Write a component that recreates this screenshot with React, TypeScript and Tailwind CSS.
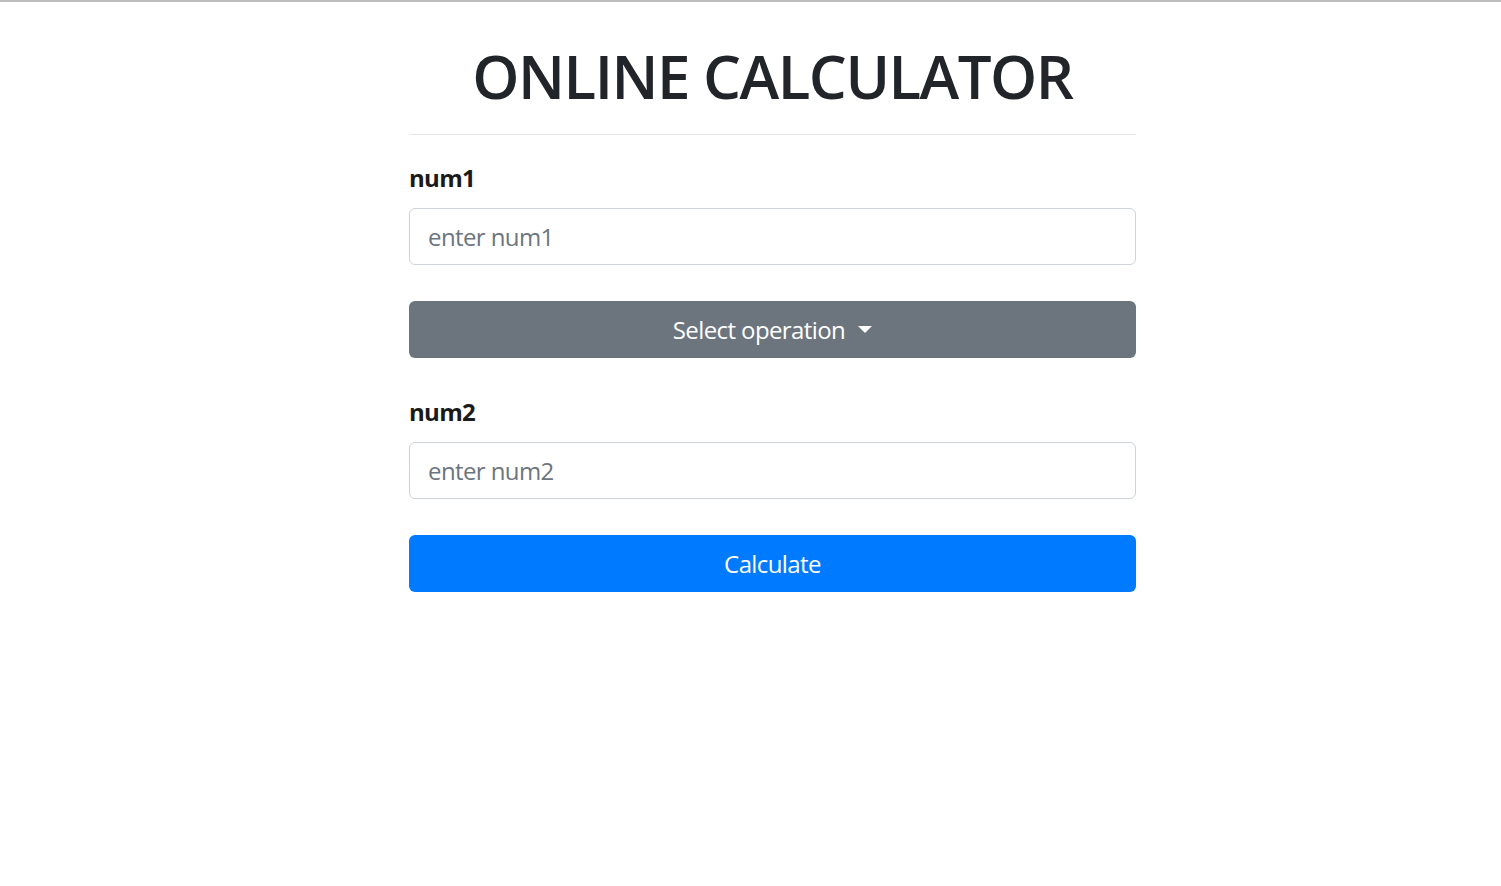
export default function App() {
  return (
    <div className="min-h-screen bg-white font-['Open_Sans',sans-serif] text-[#212529]">
      {/* top strip */}
      <div className="h-[2px] bg-[#bdbdbd]"></div>

      <div className="ml-[409px] w-[727px] pt-[38px] flex flex-col">
        <h1 className="h-[72px] text-[60px] leading-[72px] font-semibold text-center tracking-[-1.5px]">
          ONLINE CALCULATOR
        </h1>
        <div className="mt-[22px] border-t border-[#e6e6e6]"></div>

        {/* num1 */}
        <label className="mt-[25px] h-[36px] text-[24px] leading-[36px] font-bold tracking-[-0.7px] text-[#1a1a1a]">
          num1
        </label>
        <input
          type="text"
          placeholder="enter num1"
          className="mt-[12px] h-[57px] w-full rounded-[6px] border border-[#ced4da] px-[18px] text-[24px] tracking-[-0.6px] outline-none placeholder:text-[#6c757d]"
        />

        {/* operation dropdown */}
        <button className="mt-[36px] h-[57px] w-full rounded-[6px] bg-[#6c757d] text-white text-[24px] flex items-center justify-center">
          <span className="tracking-[-0.6px]">Select operation</span>
          <span className="ml-[13px] inline-block w-0 h-0 border-t-[7px] border-t-white border-x-[7px] border-x-transparent"></span>
        </button>

        {/* num2 */}
        <label className="mt-[36px] h-[36px] text-[24px] leading-[36px] font-bold tracking-[-0.7px] text-[#1a1a1a]">
          num2
        </label>
        <input
          type="text"
          placeholder="enter num2"
          className="mt-[12px] h-[57px] w-full rounded-[6px] border border-[#ced4da] px-[18px] text-[24px] tracking-[-0.6px] outline-none placeholder:text-[#6c757d]"
        />

        <button className="mt-[36px] h-[57px] w-full rounded-[6px] bg-[#007bff] text-white text-[24px] tracking-[-0.6px]">
          Calculate
        </button>
      </div>
    </div>
  )
}
